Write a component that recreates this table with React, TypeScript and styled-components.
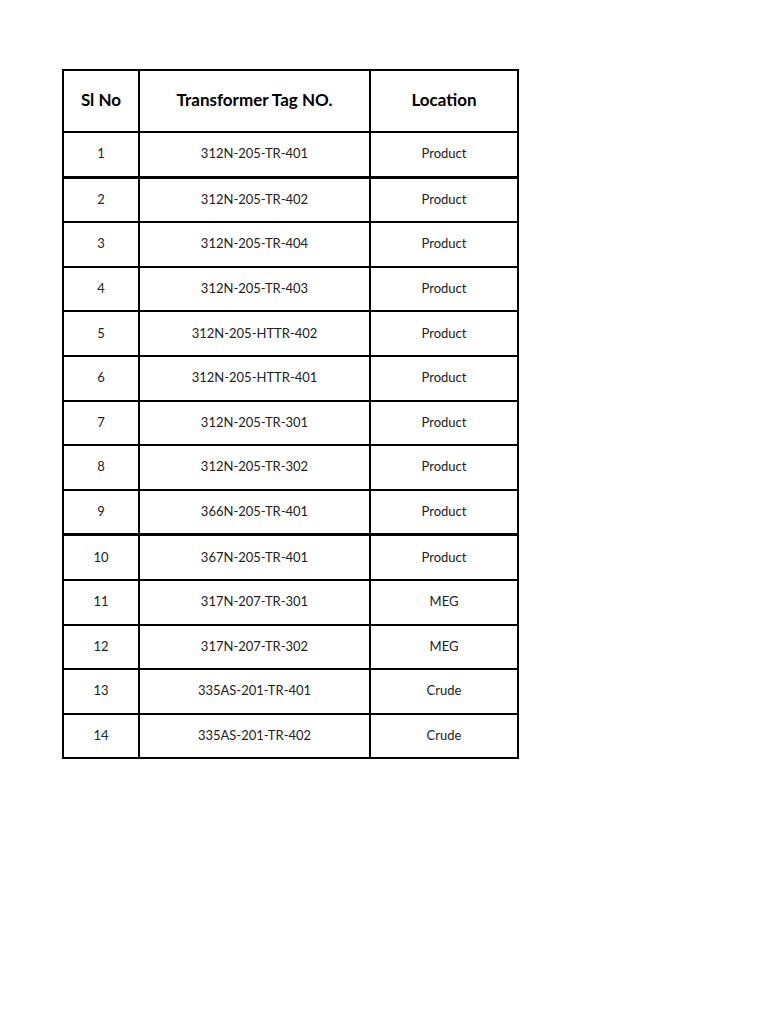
import React from 'react';
import styled, { createGlobalStyle } from 'styled-components';

const rows: [string, string, string][] = [
  ['1', '312N-205-TR-401', 'Product'],
  ['2', '312N-205-TR-402', 'Product'],
  ['3', '312N-205-TR-404', 'Product'],
  ['4', '312N-205-TR-403', 'Product'],
  ['5', '312N-205-HTTR-402', 'Product'],
  ['6', '312N-205-HTTR-401', 'Product'],
  ['7', '312N-205-TR-301', 'Product'],
  ['8', '312N-205-TR-302', 'Product'],
  ['9', '366N-205-TR-401', 'Product'],
  ['10', '367N-205-TR-401', 'Product'],
  ['11', '317N-207-TR-301', 'MEG'],
  ['12', '317N-207-TR-302', 'MEG'],
  ['13', '335AS-201-TR-401', 'Crude'],
  ['14', '335AS-201-TR-402', 'Crude'],
];

// rows followed by a heavier rule
const thickAfter = ['1', '9'];

export default function App() {
  return (
    <>
      <GlobalStyle />
      <Page>
        <Table>
          <colgroup>
            <col style={{ width: 76 }} />
            <col style={{ width: 231 }} />
            <col style={{ width: 148 }} />
          </colgroup>
          <thead>
            <tr>
              <HeadCell>Sl No</HeadCell>
              <HeadCell>Transformer Tag NO.</HeadCell>
              <HeadCell>Location</HeadCell>
            </tr>
          </thead>
          <tbody>
            {rows.map(([no, tag, loc]) => (
              <Row key={no} $thick={thickAfter.includes(no)}>
                <Cell>{no}</Cell>
                <Cell>{tag}</Cell>
                <Cell>{loc}</Cell>
              </Row>
            ))}
          </tbody>
        </Table>
      </Page>
    </>
  );
}

const GlobalStyle = createGlobalStyle`
  body {
    margin: 0;
    background: #ffffff;
    font-family: Lato, "Open Sans", sans-serif;
  }
`;

const Page = styled.div`
  width: 768px;
  height: 1024px;
  padding: 69px 0 0 62px;
  box-sizing: border-box;
`;

const Table = styled.table`
  border-collapse: collapse;
  table-layout: fixed;
  width: 455px;
  border: 2px solid #000;
`;

const HeadCell = styled.th`
  height: 57px;
  padding: 0 0 3px;
  border: 2px solid #000;
  font-size: 17px;
  font-weight: 700;
  color: #000;
  text-align: center;
  vertical-align: middle;
`;

const Row = styled.tr<{ $thick?: boolean }>`
  td {
    border-bottom-width: ${p => (p.$thick ? '3px' : '2px')};
  }
`;

const Cell = styled.td`
  height: 40.6px;
  padding: 0 0 2px;
  border: 2px solid #000;
  font-size: 13px;
  color: #222;
  text-align: center;
  vertical-align: middle;
`;
